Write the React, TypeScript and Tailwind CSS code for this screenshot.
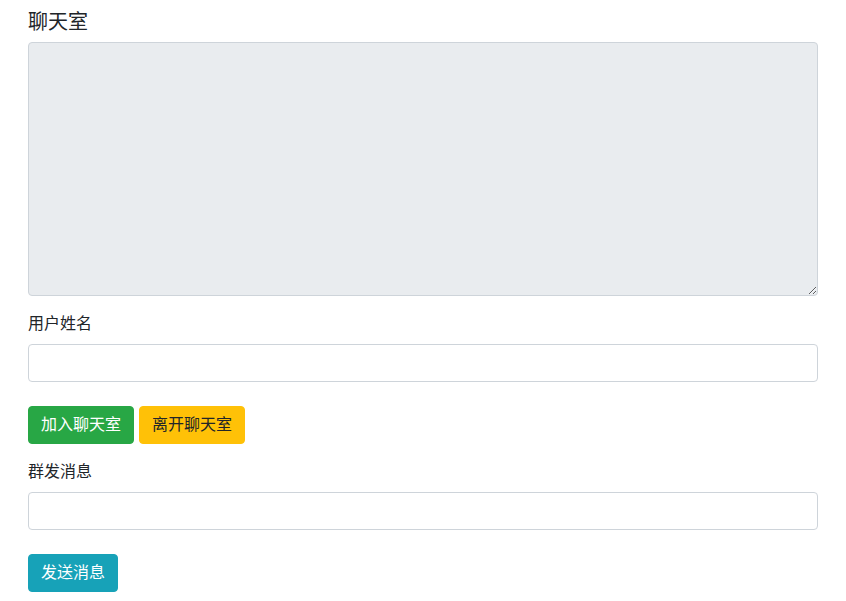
import React from 'react'

const font = { fontFamily: '"Liberation Sans", "Noto Sans CJK SC", sans-serif' }

export default function App() {
  return (
    <div className="min-h-screen bg-white px-[28px] pt-[10px] text-[#212529]" style={font}>
      <h5 className="mb-2 text-[20px] font-normal leading-[24px]">聊天室</h5>
      <div className="mb-4">
        <textarea
          readOnly
          className="block h-[254px] w-full rounded-[4px] border border-[#ced4da] bg-[#e9ecef] px-3 py-1.5 text-base outline-none"
        />
      </div>

      <div className="mb-4">
        <label className="mb-2 block text-base leading-6">用户姓名</label>
        <input
          type="text"
          className="block h-[38px] w-full rounded-[4px] border border-[#ced4da] bg-white px-3 text-base outline-none"
        />
      </div>

      <div className="mb-4 flex gap-[5px] pt-2">
        <button className="h-[38px] rounded-[4px] border border-[#28a745] bg-[#28a745] px-3 text-base leading-6 text-white">
          加入聊天室
        </button>
        <button className="h-[38px] rounded-[4px] border border-[#ffc107] bg-[#ffc107] px-3 text-base leading-6 text-[#212529]">
          离开聊天室
        </button>
      </div>

      <div className="mb-4">
        <label className="mb-2 block text-base leading-6">群发消息</label>
        <input
          type="text"
          className="block h-[38px] w-full rounded-[4px] border border-[#ced4da] bg-white px-3 text-base outline-none"
        />
      </div>

      <div className="pt-2">
        <button className="h-[38px] rounded-[4px] border border-[#17a2b8] bg-[#17a2b8] px-3 text-base leading-6 text-white">
          发送消息
        </button>
      </div>
    </div>
  )
}
